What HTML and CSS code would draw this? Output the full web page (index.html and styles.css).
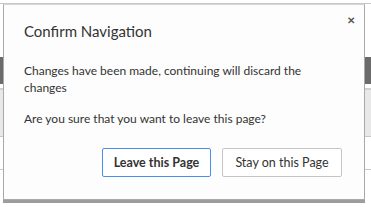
FILE: index.html
```html
<!DOCTYPE html>
<html lang="en">

<head>
    <meta charset="UTF-8">
    <meta name="viewport" content="width=device-width, initial-scale=1.0">
    <title>Confirm Navigation</title>
    <link rel="stylesheet" href="styles.css">
</head>

<body>

    <div id="page">
        <div class="top-rule"></div>
        <div class="dark-band"></div>
        <div class="light-band"></div>
        <div class="low-rule"></div>
    </div>

    <div id="dialog">
        <button class="close" title="Close">&#x2715;</button>
        <h1 class="title">Confirm Navigation</h1>
        <p class="message">Changes have been made, continuing will discard the changes</p>
        <p class="message question">Are you sure that you want to leave this page?</p>
        <div class="actions">
            <button class="leave">Leave this Page</button>
            <button class="stay">Stay on this Page</button>
        </div>
    </div>

</body>

</html>
```

FILE: styles.css
```css
* {
    box-sizing: border-box;
}

body {
    margin: 0;
    width: 371px;
    height: 207px;
    overflow: hidden;
    background-color: #ffffff;
    font-family: Lato, "Noto Sans", sans-serif;
    position: relative;
}

#page {
    display: flex;
    flex-direction: column;
    height: 100%;
}

.top-rule {
    margin-top: 3px;
    height: 1px;
    background-color: #c8c8c8;
}

.dark-band {
    margin-top: 53px;
    height: 27px;
    background-color: #6b6b6b;
}

.light-band {
    margin-top: 4px;
    height: 49px;
    background-color: #e8e8e8;
    border-top: 2px solid #d0d0d0;
    border-bottom: 1px solid #c8c8c8;
}

.low-rule {
    margin-top: 32px;
    height: 1px;
    background-color: #c8c8c8;
}

#dialog {
    position: absolute;
    left: 3px;
    top: 4px;
    width: 362px;
    height: 196px;
    background-color: #fdfdfd;
    border: 1px solid #a9a9a9;
    border-top-color: #d6d6d6;
    box-shadow: 0 3px 0 #9d9d9d;
    padding: 16px 20px 0 20px;
}

.close {
    position: absolute;
    right: 9px;
    top: 10px;
    border: none;
    background: none;
    padding: 0;
    font-size: 10px;
    font-weight: bold;
    color: #5a5a5a;
    cursor: pointer;
}

.title {
    margin: 0;
    font-size: 15px;
    font-weight: normal;
    color: #333333;
    line-height: 20px;
}

.message {
    margin: 21px 0 0 0;
    font-size: 12px;
    line-height: 17px;
    color: #333333;
}

.question {
    margin-top: 14px;
}

.actions {
    display: flex;
    justify-content: flex-end;
    gap: 11px;
    margin-top: 21px;
    padding-right: 2px;
}

.actions button {
    height: 29px;
    font-family: Lato, "Noto Sans", sans-serif;
    font-size: 12.5px;
    white-space: nowrap;
    color: #333333;
    background-color: #ffffff;
    border: 1px solid #c5c5c5;
    border-radius: 2px;
    padding: 0;
    cursor: pointer;
}

.actions button.leave {
    font-weight: bold;
    border-color: #4a8df0;
    width: 109px;
}

.actions button.stay {
    width: 120px;
}
```
